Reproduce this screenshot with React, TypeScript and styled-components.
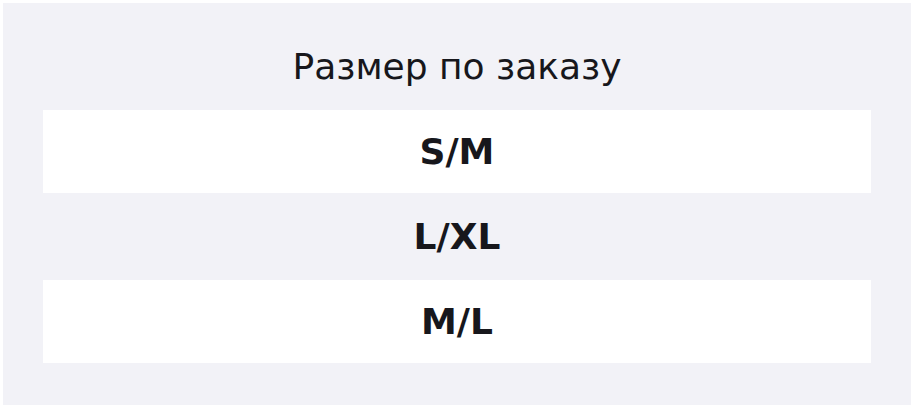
import React from 'react';
import styled, { createGlobalStyle } from 'styled-components';

const GlobalStyle = createGlobalStyle`
  body {
    margin: 0;
    background: #ffffff;
    font-family: 'DejaVu Sans', 'Noto Sans', sans-serif;
  }
`;

const Page = styled.div`
  padding: 3px;
`;

const Panel = styled.section`
  background-color: #f2f2f7;
  padding: 44px 40px 42px;
  display: flex;
  flex-direction: column;
`;

const Title = styled.h2`
  margin: 0 0 23px;
  font-size: 36px;
  line-height: 40px;
  font-weight: 400;
  text-align: center;
  color: #17171c;
`;

const SizeList = styled.ul`
  list-style: none;
  margin: 0;
  padding: 0;
  display: flex;
  flex-direction: column;
  gap: 2px;
`;

interface SizeRowProps {
  $filled: boolean;
}

const SizeRow = styled.li<SizeRowProps>`
  height: 83px;
  display: flex;
  align-items: center;
  justify-content: center;
  background-color: ${({ $filled }) => ($filled ? '#ffffff' : 'transparent')};
  font-size: 36px;
  font-weight: 700;
  color: #17171c;
`;

const sizes = ['S/M', 'L/XL', 'M/L'];

const App = () => {
  return (
    <Page>
      <GlobalStyle />
      <Panel>
        <Title>Размер по заказу</Title>
        <SizeList>
          {sizes.map((size, i) => (
            <SizeRow key={size} $filled={i % 2 === 0}>
              {size}
            </SizeRow>
          ))}
        </SizeList>
      </Panel>
    </Page>
  );
};

export default App;
